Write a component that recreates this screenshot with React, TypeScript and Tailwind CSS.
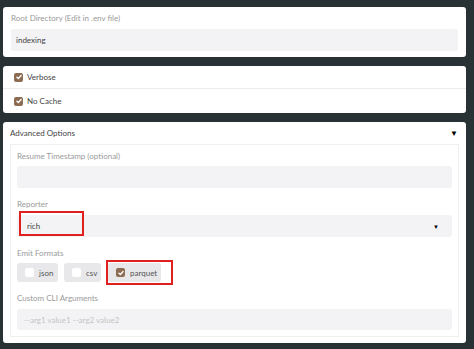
import React from 'react';

const LABEL = 'block h-[14px] text-[8px] leading-[14px] text-[#9a9a9a]';
const INPUT = 'flex items-center w-full rounded-[3px] bg-[#f3f3f5] px-[7px] text-[8px] text-[#444]';

function Check({checked}: {checked: boolean}) {
  if (!checked) return <span className="block size-[9px] rounded-[2px] bg-white" />;
  return (
    <span className="flex size-[9px] items-center justify-center rounded-[2px] bg-[#8c6c52]">
      <svg width="6" height="6" viewBox="0 0 8 8">
        <path d="M1.3 4.2 3.2 6 6.8 2" fill="none" stroke="white" strokeWidth="1.8" strokeLinecap="round" strokeLinejoin="round" />
      </svg>
    </span>
  );
}

function Chip({label, checked, w}: {label: string; checked: boolean; w: string}) {
  return (
    <div className={`flex h-[19px] items-center gap-[5px] rounded-[3px] bg-[#e8e8eb] pl-[8px] text-[8px] text-[#555] ${w}`}>
      <Check checked={checked} />
      <span>{label}</span>
    </div>
  );
}

export default function App() {
  return (
    <div
      className="relative h-[349px] w-[474px] overflow-hidden bg-[#283235] pl-[3px] pr-[8px] pt-[7px]"
      style={{fontFamily: 'Lato, "Noto Sans", sans-serif'}}
    >
      {/* root directory */}
      <div className="rounded-[3px] bg-white px-[8px] pb-[6px] pt-[4px]">
        <span className={LABEL}>Root Directory (Edit in .env file)</span>
        <div className={`${INPUT} mt-[4px] h-[22px] pl-[5px]`}>indexing</div>
      </div>

      {/* toggles */}
      <div className="mt-[9px] rounded-[3px] bg-white">
        <label className="flex h-[23px] items-center gap-[4px] border-b border-[#ececec] pl-[11px] text-[8px] text-[#444]">
          <Check checked />
          <span>Verbose</span>
        </label>
        <label className="flex h-[24px] items-center gap-[4px] pl-[11px] text-[8px] text-[#444]">
          <Check checked />
          <span>No Cache</span>
        </label>
      </div>

      {/* advanced */}
      <div className="mt-[9px] rounded-[3px] bg-white px-[7px] pb-[6px]">
        <div className="flex h-[22px] items-center justify-between text-[8px] text-[#444]">
          <span>Advanced Options</span>
          <span className="pr-[1px] text-[8px] text-black">▼</span>
        </div>
        <div className="border border-[#efefef] px-[6px] pb-[6px] pt-[4px]">
          <span className={LABEL}>Resume Timestamp (optional)</span>
          <div className={`${INPUT} mt-[3px] h-[22px]`} />

          <span className={`${LABEL} mt-[9px]`}>Reporter</span>
          <div className={`${INPUT} mt-[4px] h-[22px] justify-between pl-[10px] pr-[13px]`}>
            <span>rich</span>
            <span className="text-[6px] text-black">▼</span>
          </div>

          <span className={`${LABEL} mt-[9px]`}>Emit Formats</span>
          <div className="mt-[3px] flex gap-[6px]">
            <Chip label="json" checked={false} w="w-[41px]" />
            <Chip label="csv" checked={false} w="w-[37px]" />
            <Chip label="parquet" checked w="ml-[1px] w-[53px]" />
          </div>

          <span className={`${LABEL} mt-[9px]`}>Custom CLI Arguments</span>
          <div className={`${INPUT} mt-[4px] h-[21px] text-[#c4c4c4]`}>--arg1 value1 --arg2 value2</div>
        </div>
      </div>

      {/* annotation boxes */}
      <div className="absolute left-[19px] top-[211px] h-[25px] w-[65px] border-2 border-[#e01f1f]" />
      <div className="absolute left-[106px] top-[260px] h-[25px] w-[67px] border-2 border-[#e01f1f]" />
    </div>
  );
}
